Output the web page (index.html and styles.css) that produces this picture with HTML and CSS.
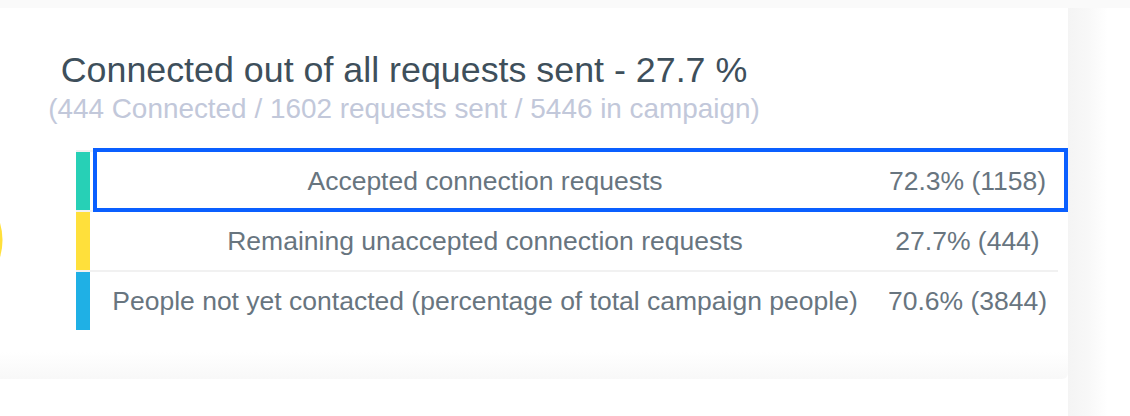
FILE: index.html
```html
<!DOCTYPE html>
<html lang="en">
<head>
<meta charset="utf-8">
<title>Connection stats</title>
<link rel="stylesheet" href="styles.css">
</head>
<body>
<div class="topbar"></div>
<div class="layout">
  <div class="main">
    <section class="card">
      <header class="head">
        <h2 class="title">Connected out of all requests sent - 27.7 %</h2>
        <p class="subtitle">(444 Connected / 1602 requests sent / 5446 in campaign)</p>
      </header>
      <div class="body">
        <svg class="chart" width="4" height="60" viewBox="0 0 4 60" aria-hidden="true">
          <circle cx="-58.5" cy="30" r="61" fill="#ffe03b"/>
        </svg>
        <div class="legend">
          <div class="row row-focus">
            <span class="bar bar-teal"></span>
            <div class="cells">
              <span class="label">Accepted connection requests</span>
              <span class="value">72.3% (1158)</span>
            </div>
          </div>
          <div class="row">
            <span class="bar bar-yellow"></span>
            <div class="cells">
              <span class="label">Remaining unaccepted connection requests</span>
              <span class="value">27.7% (444)</span>
            </div>
          </div>
          <div class="row">
            <span class="bar bar-blue"></span>
            <div class="cells">
              <span class="label">People not yet contacted (percentage of total campaign people)</span>
              <span class="value">70.6% (3844)</span>
            </div>
          </div>
        </div>
      </div>
    </section>
    <section class="card card-next"></section>
  </div>
  <div class="side"></div>
</div>
</body>
</html>
```

FILE: styles.css
```css
html, body {
  margin: 0;
  padding: 0;
}

body {
  width: 1130px;
  height: 416px;
  overflow: hidden;
  background: #ffffff;
  font-family: "Liberation Sans", Arial, Helvetica, sans-serif;
}

.topbar {
  height: 8px;
  background: #fafafa;
}

.layout {
  display: flex;
  align-items: stretch;
  height: 408px;
}

.main {
  width: 1068px;
  display: flex;
  flex-direction: column;
  gap: 2px;
}

.side {
  width: 40px;
  background: linear-gradient(to right, #f4f4f4 0%, #f8f8f8 50%, #ffffff 100%);
}

.card {
  height: 371px;
  box-sizing: border-box;
  padding-top: 42px;
  border-radius: 0 6px 6px 0;
  background: linear-gradient(to bottom, #ffffff 0, #ffffff 344px, #f8f8f8 371px);
  overflow: hidden;
}

.card-next {
  flex: 1;
  height: auto;
  padding: 0;
  border-radius: 0 6px 0 0;
  background: #ffffff;
}

.head {
  width: 808px;
  text-align: center;
}

.title {
  margin: 0;
  font-size: 35.8px;
  line-height: 40px;
  font-weight: normal;
  color: #3e4f5b;
}

.subtitle {
  margin: 3px 0 0;
  font-size: 27.9px;
  line-height: 32px;
  color: #c2c8da;
}

.body {
  margin-top: 25px;
  display: flex;
  align-items: center;
}

.chart {
  display: block;
  flex: 0 0 4px;
}

.legend {
  margin-left: 72px;
  display: flex;
  flex-direction: column;
}

.row {
  display: flex;
  height: 60px;
  box-sizing: border-box;
  border-top: 2px solid #f1f1f1;
}

.bar {
  flex: 0 0 14px;
}

.bar-teal { background: #27d0b6; }
.bar-yellow { background: #ffe03b; }
.bar-blue { background: #1fb0e5; }

.cells {
  display: flex;
  align-items: center;
  margin-left: 3px;
  width: 965px;
  color: #68757f;
  font-size: 26.5px;
}

.row-focus .cells {
  position: relative;
}

.label {
  flex: 0 0 784px;
  text-align: center;
  white-space: nowrap;
}

.value {
  flex: 0 0 181px;
  text-align: center;
  white-space: nowrap;
}

.row-focus .cells::after {
  content: "";
  position: absolute;
  z-index: 2;
  left: 0;
  right: -10px;
  top: -4px;
  bottom: -2px;
  box-sizing: border-box;
  border: 4px solid #0a5fff;
}
```
